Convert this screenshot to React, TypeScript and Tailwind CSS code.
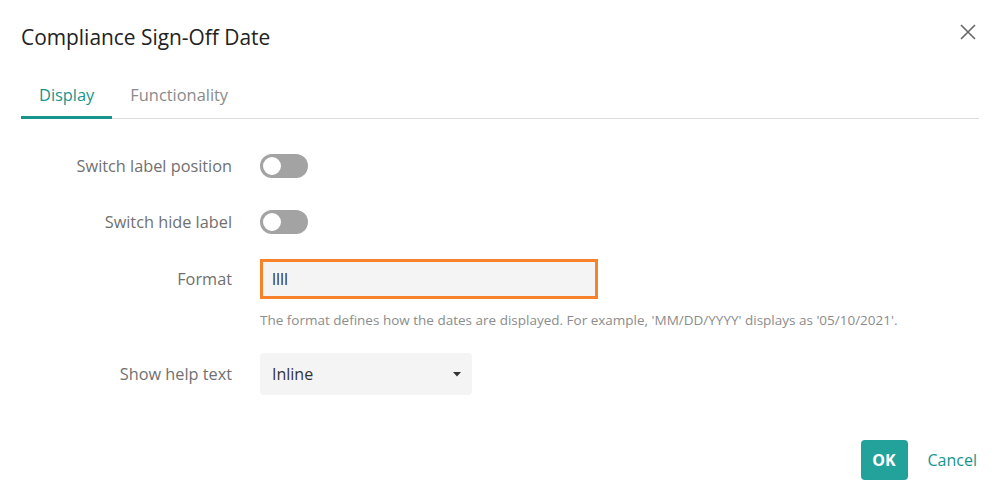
import { useState } from "react";

const Toggle = ({ on, onClick }: { on: boolean; onClick: () => void }) => (
  <button
    type="button"
    onClick={onClick}
    className={`relative block w-[48px] h-[24px] rounded-full ${on ? "bg-[#23a19b]" : "bg-[#a3a3a3]"}`}
  >
    <span
      className={`absolute top-[1px] ${on ? "left-[25px]" : "left-[1px]"} w-[22px] h-[22px] rounded-full bg-white border-2 border-[#a3a3a3]`}
    />
  </button>
);

const Row = ({ label, children }: { label: string; children: React.ReactNode }) => (
  <div className="flex items-center">
    <div className="w-[211px] shrink-0 text-right text-[16.3px] leading-[24px] text-[#707070]">{label}</div>
    <div className="ml-[28px] flex flex-1 items-center">{children}</div>
  </div>
);

const App = () => {
  const [tab, setTab] = useState<string>("display");
  const [labelPos, setLabelPos] = useState<boolean>(false);
  const [hideLabel, setHideLabel] = useState<boolean>(false);
  const [format, setFormat] = useState<string>("llll");

  return (
    <div
      className="w-[1002px] h-[495px] bg-white px-[21px] pt-[20px] flex flex-col"
      style={{ fontFamily: '"Open Sans", sans-serif' }}
    >
      <div className="flex items-start justify-between">
        <h1 className="text-[20.9px] leading-[34px] text-[#222] font-medium">
          Compliance Sign-Off Date
        </h1>
        <button type="button" className="mt-[3px] mr-[4px] text-[#666]">
          <svg width="18" height="18" viewBox="0 0 18 18" fill="none" stroke="currentColor" strokeWidth="1.6">
            <path d="M2 2 L16 16 M16 2 L2 16" />
          </svg>
        </button>
      </div>

      <div className="mt-[21px] flex border-b border-[#dddddd] mr-[2px]">
        <button
          type="button"
          onClick={() => setTab("display")}
          className={`px-[18px] h-[44px] text-[16.4px] -mb-[1px] border-b-[3px] ${
            tab === "display" ? "text-[#16958e] border-[#16958e]" : "text-[#8a8a8a] border-transparent"
          }`}
        >
          Display
        </button>
        <button
          type="button"
          onClick={() => setTab("functionality")}
          className={`px-[18px] h-[44px] text-[16.4px] -mb-[1px] border-b-[3px] ${
            tab === "functionality" ? "text-[#16958e] border-[#16958e]" : "text-[#8a8a8a] border-transparent"
          }`}
        >
          Functionality
        </button>
      </div>

      <div className="mt-[35px] flex flex-col">
        <Row label="Switch label position">
          <Toggle on={labelPos} onClick={() => setLabelPos(!labelPos)} />
        </Row>
        <div className="mt-[32px]">
          <Row label="Switch hide label">
            <Toggle on={hideLabel} onClick={() => setHideLabel(!hideLabel)} />
          </Row>
        </div>
        <div className="mt-[25px]">
          <Row label="Format">
            <input
              type="text"
              value={format}
              onChange={(e) => setFormat(e.target.value)}
              className="w-[338px] h-[40px] bg-[#f4f4f4] border-[3px] border-[#f7822b] px-[9px] text-[16px] text-[#333] outline-none"
            />
          </Row>
        </div>
        <div className="ml-[239px] mt-[12px] text-[13.5px] leading-[18px] text-[#8c8c8c]">
          The format defines how the dates are displayed. For example, 'MM/DD/YYYY' displays as '05/10/2021'.
        </div>
        <div className="mt-[24px]">
          <Row label="Show help text">
            <div className="w-[212px] h-[42px] bg-[#f4f4f4] rounded-[4px] flex items-center justify-between pl-[12px] pr-[11px] text-[16px] text-[#333]">
              <span>Inline</span>
              <svg width="8" height="5" viewBox="0 0 8 5" fill="#333">
                <path d="M0 0 H8 L4 4.5 Z" />
              </svg>
            </div>
          </Row>
        </div>
      </div>

      <div className="mt-auto mb-[15px] flex items-center justify-end gap-[20px] mr-[4px]">
        <button
          type="button"
          className="w-[47px] h-[40px] rounded-[4px] bg-[#23a19b] text-white text-[16px] font-bold"
        >
          OK
        </button>
        <button type="button" className="text-[16px] text-[#16958e] font-medium">
          Cancel
        </button>
      </div>
    </div>
  );
};

export default App;
